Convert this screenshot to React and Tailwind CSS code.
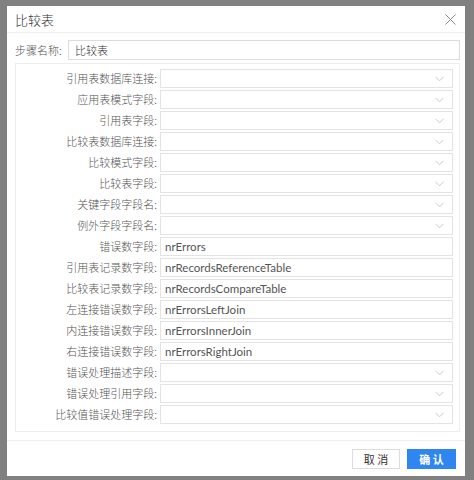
import React from "react";

const rows = [
  ["引用表数据库连接:", null],
  ["应用表模式字段:", null],
  ["引用表字段:", null],
  ["比较表数据库连接:", null],
  ["比较模式字段:", null],
  ["比较表字段:", null],
  ["关键字段字段名:", null],
  ["例外字段字段名:", null],
  ["错误数字段:", "nrErrors"],
  ["引用表记录数字段:", "nrRecordsReferenceTable"],
  ["比较表记录数字段:", "nrRecordsCompareTable"],
  ["左连接错误数字段:", "nrErrorsLeftJoin"],
  ["内连接错误数字段:", "nrErrorsInnerJoin"],
  ["右连接错误数字段:", "nrErrorsRightJoin"],
  ["错误处理描述字段:", null],
  ["错误处理引用字段:", null],
  ["比较值错误处理字段:", null],
];

function Chevron() {
  return (
    <svg width="9" height="6" viewBox="0 0 9 6" className="shrink-0">
      <path d="M0.5 0.8 L4.5 4.8 L8.5 0.8" fill="none" stroke="#c4c4c4" strokeWidth="0.9" />
    </svg>
  );
}

export default function App() {
  return (
    <div
      className="w-[474px] h-[480px] bg-[#808080] pt-[6px] pl-[7px]"
      style={{ fontFamily: '"Noto Sans CJK SC", sans-serif' }}
    >
      <div className="w-[458px] h-[470px] bg-white flex flex-col">
        {/* header */}
        <div className="h-[27px] flex items-center justify-between pl-[8px] pr-[8px] border-b border-[#f0f0f0]">
          <span className="text-[13px] text-[#333] font-light leading-none">比较表</span>
          <svg width="11" height="11" viewBox="0 0 11 11" className="mr-[1px]">
            <path d="M0.5 0.5 L10.5 10.5 M10.5 0.5 L0.5 10.5" stroke="#888" strokeWidth="1" />
          </svg>
        </div>
        {/* body */}
        <div className="pl-[8px] pr-[5px] pt-[7px]">
          <div className="flex items-center h-[20px]">
            <span className="w-[53px] text-[11px] text-[#555] font-light leading-none">步骤名称:</span>
            <div className="flex-1 h-[20px] border border-[#dcdcdc] flex items-center pl-[6px] text-[11px] text-[#333] font-light">
              比较表
            </div>
          </div>
          <div className="mt-[3px] border border-[#ededed] pt-[5px] pb-[7px] pr-[6px] flex flex-col gap-[2px]">
            {rows.map(([label, value]) => (
              <div key={label} className="flex items-center h-[19px]">
                <span className="w-[144px] pr-[3px] text-right text-[11px] text-[#555] font-light leading-none whitespace-nowrap">
                  {label}
                </span>
                <div className="flex-1 h-[19px] border border-[#e3e3e3] flex items-center justify-between pl-[4px] pr-[8px]">
                  <span
                    className="text-[11.5px] text-[#555] leading-none"
                    style={{ fontFamily: 'Lato, "Noto Sans", sans-serif' }}
                  >
                    {value || ""}
                  </span>
                  {value ? null : <Chevron />}
                </div>
              </div>
            ))}
          </div>
        </div>
        {/* footer */}
        <div className="mt-[8px] border-t border-[#f0f0f0] flex-1 flex justify-end items-start pt-[8px] pr-[9px] gap-[7px]">
          <button className="w-[48px] h-[20px] border border-[#dcdcdc] bg-white text-[11px] text-[#333] leading-none">
            取 消
          </button>
          <button className="w-[49px] h-[20px] bg-[#2f86f0] text-white text-[11px] font-bold leading-none">
            确 认
          </button>
        </div>
      </div>
    </div>
  );
}
